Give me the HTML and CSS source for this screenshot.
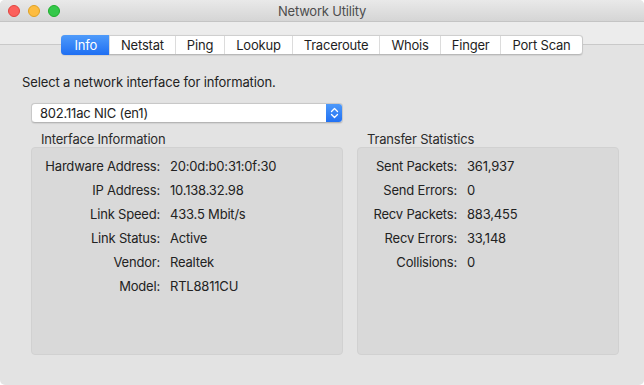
FILE: index.html
```html
<!DOCTYPE html>
<html lang="en">
<head>
<meta charset="UTF-8">
<title>Network Utility</title>
<link rel="stylesheet" href="styles.css">
</head>

<body>

<div class="window">

    <!-- TITLE BAR -->
    <div class="titlebar">
        <div class="lights">
            <span class="light close"></span>
            <span class="light minimize"></span>
            <span class="light zoom"></span>
        </div>
        <div class="title">Network Utility</div>
        <div></div>
    </div>

    <!-- TABS -->
    <div class="tabbar">
        <div class="tabs">
            <div class="tab active">Info</div>
            <div class="tab">Netstat</div>
            <div class="tab">Ping</div>
            <div class="tab">Lookup</div>
            <div class="tab">Traceroute</div>
            <div class="tab">Whois</div>
            <div class="tab">Finger</div>
            <div class="tab">Port Scan</div>
        </div>
    </div>

    <!-- INFO PANE -->
    <div class="pane">
        <p class="prompt">Select a network interface for information.</p>

        <div class="popup">
            <span class="popup-label">802.11ac NIC (en1)</span>
            <span class="popup-arrows">
                <svg width="17" height="20" viewBox="0 0 17 20">
                    <path d="M5.5 8.5 L8.5 5.5 L11.5 8.5" fill="none" stroke="#fff" stroke-width="1.3" stroke-linecap="round" stroke-linejoin="round"/>
                    <path d="M5.5 11.5 L8.5 14.5 L11.5 11.5" fill="none" stroke="#fff" stroke-width="1.3" stroke-linecap="round" stroke-linejoin="round"/>
                </svg>
            </span>
        </div>

        <div class="groups">
            <section class="group">
                <h2>Interface Information</h2>
                <div class="box">
                    <div class="rows iface" id="iface-rows"></div>
                </div>
            </section>

            <section class="group">
                <h2>Transfer Statistics</h2>
                <div class="box">
                    <div class="rows stats" id="stats-rows"></div>
                </div>
            </section>
        </div>
    </div>

</div>

<script>
const iface = [
    ["Hardware Address", "20:0d:b0:31:0f:30"],
    ["IP Address", "10.138.32.98"],
    ["Link Speed", "433.5 Mbit/s"],
    ["Link Status", "Active"],
    ["Vendor", "Realtek"],
    ["Model", "RTL8811CU"]
];

const stats = [
    ["Sent Packets", "361,937"],
    ["Send Errors", "0"],
    ["Recv Packets", "883,455"],
    ["Recv Errors", "33,148"],
    ["Collisions", "0"]
];

function fillRows(id, rows) {
    const el = document.getElementById(id);
    el.innerHTML = "";
    rows.forEach(row => {
        el.innerHTML += `
            <span class="key">${row[0]}:</span>
            <span class="value">${row[1]}</span>
        `;
    });
}

fillRows("iface-rows", iface);
fillRows("stats-rows", stats);
</script>

</body>
</html>
```

FILE: styles.css
```css
html, body {
    margin: 0;
    background: #fff;
}

body {
    font-family: Inter, 'Noto Sans', 'Liberation Sans', sans-serif;
    font-size: 13px;
    letter-spacing: -0.2px;
    color: #222;
}

.window {
    width: 644px;
    height: 385px;
    box-sizing: border-box;
    border-radius: 5px;
    overflow: hidden;
    background: #e3e3e3;
    display: flex;
    flex-direction: column;
}

/* TITLE BAR */
.titlebar {
    height: 21px;
    border-bottom: 1px solid #c4c4c4;
    background: linear-gradient(#e9e9e9, #d5d5d5);
    display: grid;
    grid-template-columns: 1fr auto 1fr;
    align-items: center;
}

.lights {
    display: flex;
    gap: 8px;
    padding-left: 8px;
}

.light {
    width: 12px;
    height: 12px;
    border-radius: 50%;
    box-sizing: border-box;
}

.light.close { background: #fc605c; border: 1px solid #e0443e; }
.light.minimize { background: #fdbc40; border: 1px solid #dea123; }
.light.zoom { background: #34c84a; border: 1px solid #1dad2b; }

.title {
    color: #4d4d4d;
    font-size: 13px;
}

/* TABS */
.tabbar {
    padding-top: 13px;
    display: flex;
    justify-content: center;
    background: linear-gradient(#ececec 0 22px, #c9c9c9 22px 23px, #e3e3e3 23px);
}

.tabs {
    display: flex;
    height: 20px;
    box-sizing: border-box;
    background: #fff;
    border: 1px solid #c8c8c8;
    border-top-color: #cfcfcf;
    border-bottom-color: #b9b9b9;
    border-radius: 4px;
    box-shadow: 0 0.5px 1px rgba(0,0,0,0.08);
}

.tab {
    padding: 0 11px;
    line-height: 18px;
    color: #1e1e1e;
    border-left: 1px solid #dcdcdc;
}

.tab:first-child { border-left: none; }

.tab.active {
    margin: -1px 0 -1px -1px;
    padding: 1px 12px 1px 13px;
    color: #fff;
    border-radius: 4px 0 0 4px;
    background: linear-gradient(#4f9bfa, #1f6ff3);
}

/* PANE */
.pane {
    padding: 19px 25px 0 22px;
}

.prompt {
    margin: 0;
    line-height: 16px;
    letter-spacing: -0.13px;
}

.popup {
    margin: 13px 0 0 9px;
    width: 312px;
    height: 20px;
    box-sizing: border-box;
    display: flex;
    align-items: center;
    background: #fff;
    border: 1px solid #c8c8c8;
    border-bottom-color: #b5b5b5;
    border-radius: 4px;
    overflow: hidden;
    box-shadow: 0 0.5px 1px rgba(0,0,0,0.08);
}

.popup-label {
    flex: 1;
    padding-left: 8px;
}

.popup-arrows {
    width: 17px;
    height: 20px;
    margin-right: -1px;
    background: linear-gradient(#4f9bfa, #1f6ff3);
    display: flex;
}

.groups {
    margin: 8px 0 0 9px;
    display: grid;
    grid-template-columns: 312px 262px;
    gap: 14px;
}

.group h2 {
    margin: 0;
    padding-left: 10px;
    font-size: 13px;
    font-weight: normal;
    line-height: 16px;
    color: #2b2b2b;
}

.box {
    height: 208px;
    box-sizing: border-box;
    background: #d9d9d9;
    border: 1px solid #d1d1d1;
    border-radius: 4px;
    padding-top: 6px;
}

.rows {
    display: grid;
    column-gap: 10px;
    line-height: 24px;
}

.rows.iface { grid-template-columns: 128px 1fr; }
.rows.stats { grid-template-columns: 99px 1fr; }

.key { text-align: right; }
```
